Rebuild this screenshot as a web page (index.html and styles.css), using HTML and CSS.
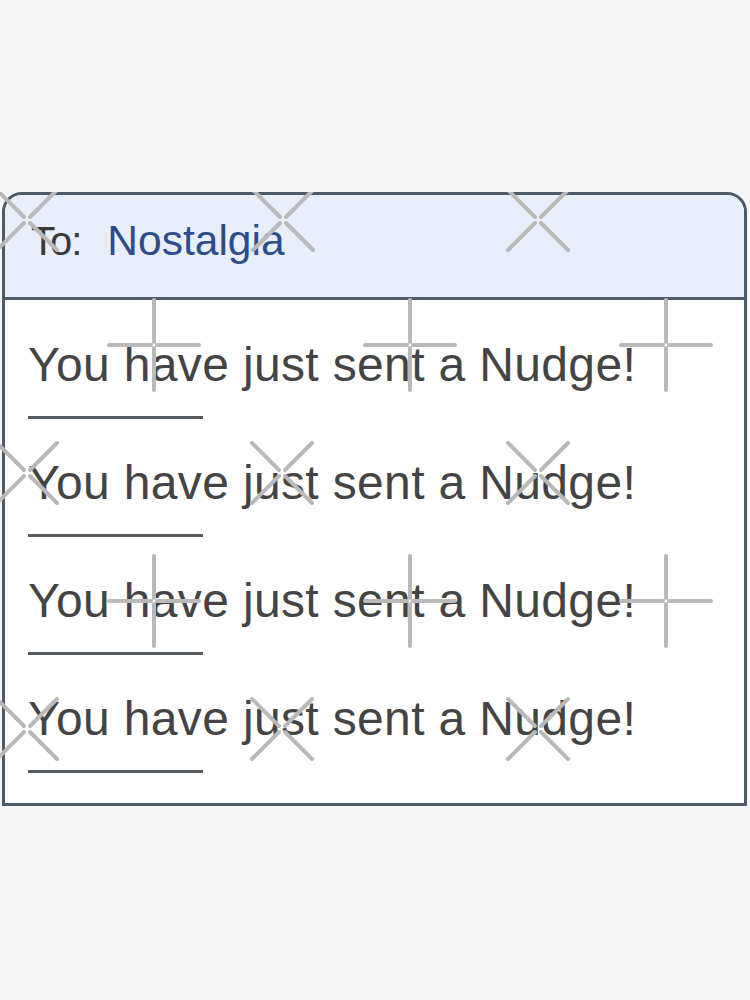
FILE: index.html
```html
<!DOCTYPE html>
<html lang="en">
<head>
<meta charset="utf-8">
<title>Nudge</title>
<link rel="stylesheet" href="styles.css">
</head>
<body>
<main class="page">
  <div class="sticker">
    <section class="window">
      <header class="window-head">
        <span class="to-label">To:</span>
        <span class="to-name">Nostalgia</span>
      </header>
      <div class="window-body">
        <div class="msg"><p class="msg-text">You have just sent a Nudge!</p><div class="msg-rule"></div></div>
        <div class="msg"><p class="msg-text">You have just sent a Nudge!</p><div class="msg-rule"></div></div>
        <div class="msg"><p class="msg-text">You have just sent a Nudge!</p><div class="msg-rule"></div></div>
        <div class="msg"><p class="msg-text">You have just sent a Nudge!</p><div class="msg-rule"></div></div>
      </div>
    </section>
    <svg class="watermark" viewBox="0 192 750 614" width="750" height="614" aria-hidden="true">
      <defs>
        <path id="wm-x" d="M-30 -30 L-3 -3 M3 3 L30 30 M30 -30 L3 -3 M-3 3 L-30 30"/>
        <path id="wm-plus" d="M0 -45 V-3 M0 3 V45 M-45 0 H-3 M3 0 H45"/>
      </defs>
      <g class="wm-marks">
        <use href="#wm-x" x="27" y="220"/>
        <use href="#wm-x" x="283" y="220"/>
        <use href="#wm-x" x="538" y="220"/>
        <use href="#wm-x" x="27" y="473"/>
        <use href="#wm-x" x="282" y="473"/>
        <use href="#wm-x" x="538" y="473"/>
        <use href="#wm-x" x="27" y="729"/>
        <use href="#wm-x" x="282" y="729"/>
        <use href="#wm-x" x="538" y="729"/>
        <use href="#wm-plus" x="154" y="345"/>
        <use href="#wm-plus" x="410" y="345"/>
        <use href="#wm-plus" x="666" y="345"/>
        <use href="#wm-plus" x="154" y="601"/>
        <use href="#wm-plus" x="410" y="601"/>
        <use href="#wm-plus" x="666" y="601"/>
      </g>
    </svg>
  </div>
</main>
</body>
</html>
```

FILE: styles.css
```css
html, body {
  margin: 0;
  padding: 0;
  background: #f7f7f7;
}

.page {
  padding-top: 192px;
  width: 750px;
}

.sticker {
  position: relative;
  width: 750px;
  padding: 0 3px 0 2px;
  box-sizing: border-box;
}

.window {
  width: 745px;
  height: 614px;
  box-sizing: border-box;
  border: 3px solid #4d5a6a;
  border-radius: 20px 20px 0 0;
  background: #ffffff;
  overflow: hidden;
  display: flex;
  flex-direction: column;
}

.window-head {
  height: 105px;
  box-sizing: border-box;
  padding: 25px 0 0 26px;
  background: #e8eefa;
  border-bottom: 3px solid #4d5a6a;
  display: flex;
  align-items: baseline;
  font-family: "Liberation Sans", Arial, sans-serif;
  font-size: 42px;
  line-height: 42px;
}

.to-label {
  color: #3a3a3a;
  font-size: 40px;
  letter-spacing: -1px;
}

.to-name {
  color: #2d4c8c;
  margin-left: 26px;
  font-size: 42.5px;
}

.window-body {
  flex: 1;
  padding: 41px 0 0 23px;
  display: flex;
  flex-direction: column;
  gap: 40px;
}

.msg {
  display: flex;
  flex-direction: column;
}

.msg-text {
  margin: 0;
  font-family: "Liberation Sans", Arial, sans-serif;
  font-size: 48px;
  line-height: 48px;
  letter-spacing: 0.35px;
  color: #444444;
  white-space: nowrap;
}

.msg-rule {
  margin-top: 27px;
  width: 175px;
  height: 3px;
  background: #555a5f;
}

.watermark {
  position: absolute;
  left: 0;
  top: 0;
  width: 750px;
  height: 614px;
  pointer-events: none;
}

.wm-marks use {
  fill: none;
  stroke: #b9b9b9;
  stroke-width: 4;
  stroke-linecap: round;
}
```
